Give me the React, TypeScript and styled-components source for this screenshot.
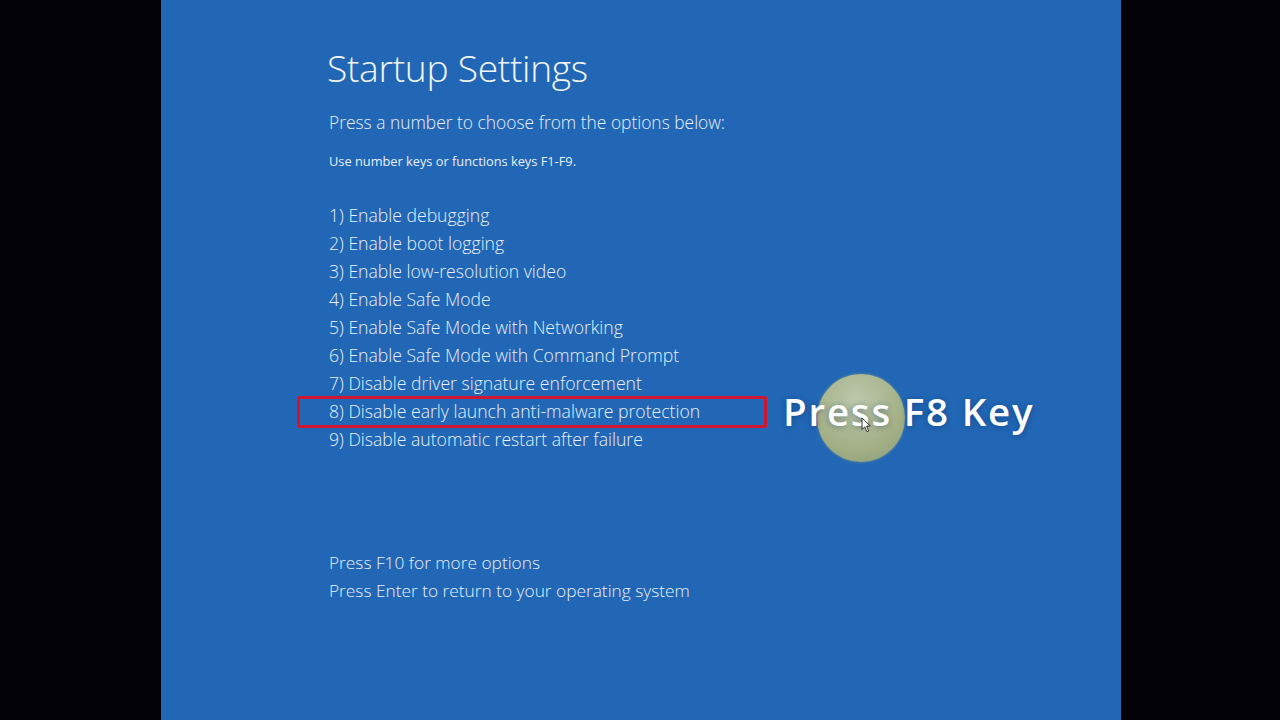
import React from "react";
import styled, { createGlobalStyle } from "styled-components";

const GlobalStyle = createGlobalStyle`
  html, body {
    margin: 0;
    padding: 0;
    background: #000;
  }
  #root {
    width: 1280px;
    height: 720px;
  }
`;

const options = [
  "1) Enable debugging",
  "2) Enable boot logging",
  "3) Enable low-resolution video",
  "4) Enable Safe Mode",
  "5) Enable Safe Mode with Networking",
  "6) Enable Safe Mode with Command Prompt",
  "7) Disable driver signature enforcement",
  "8) Disable early launch anti-malware protection",
  "9) Disable automatic restart after failure",
];

export default function App() {
  return (
    <>
      <GlobalStyle />
      <Frame>
        <SideBar $width={161} />
        <Screen>
          <Content>
            <Title>Startup Settings</Title>
            <Lead>Press a number to choose from the options below:</Lead>
            <Hint>Use number keys or functions keys F1-F9.</Hint>
            <OptionList>
              {options.map((text, i) => (
                <Option key={text} $highlight={i === 7}>
                  {text}
                </Option>
              ))}
            </OptionList>
            <Footer>
              <Line>Press F10 for more options</Line>
              <Line>Press Enter to return to your operating system</Line>
            </Footer>
          </Content>

          <Callout>
            <ClickSpot />
            <CalloutText>Press F8 Key</CalloutText>
            <Cursor viewBox="0 0 12 18" aria-hidden>
              <path
                d="M1 1 L1 14 L4 11 L6.5 16.5 L8.5 15.6 L6 10.2 L10.2 10.2 Z"
                fill="#fff"
                stroke="#222"
                strokeWidth="1"
                strokeLinejoin="round"
              />
            </Cursor>
          </Callout>
        </Screen>
        <SideBar />
      </Frame>
    </>
  );
}

const Frame = styled.div`
  display: flex;
  width: 1280px;
  height: 720px;
  background: #000;
  overflow: hidden;
`;

const SideBar = styled.div<{ $width?: number }>`
  flex: ${({ $width }) => ($width ? `0 0 ${$width}px` : "1")};
  background: #030208;
`;

const Screen = styled.div`
  position: relative;
  width: 960px;
  flex: none;
  background: #2167b5;
  color: #e8f0fa;
  font-family: "Open Sans", "Liberation Sans", sans-serif;
`;

const Content = styled.div`
  display: flex;
  flex-direction: column;
  padding: 44px 0 0 166px;
`;

const Title = styled.h1`
  margin: 0;
  font-size: 37.2px;
  font-weight: 300;
  line-height: 48px;
  letter-spacing: -0.3px;
  color: #f2f6fb;
`;

const Lead = styled.p`
  margin: 18px 0 0 2px;
  font-size: 17.4px;
  font-weight: 300;
  line-height: 24px;
`;

const Hint = styled.p`
  margin: 18px 0 0 2px;
  font-size: 12.8px;
  font-weight: 400;
  line-height: 18px;
`;

const OptionList = styled.ul`
  list-style: none;
  margin: 31px 0 0 2px;
  padding: 0;
  display: flex;
  flex-direction: column;
`;

const Option = styled.li<{ $highlight?: boolean }>`
  position: relative;
  font-size: 17.6px;
  font-weight: 300;
  line-height: 28px;

  ${({ $highlight }) =>
    $highlight &&
    `
    &::after {
      content: "";
      box-sizing: border-box;
      position: absolute;
      left: -32px;
      top: -1px;
      width: 470px;
      height: 32px;
      border: 3px solid #d01630;
      border-radius: 2px;
    }
  `}
`;

const Footer = styled.div`
  display: flex;
  flex-direction: column;
  margin: 96px 0 0 2px;
`;

const Line = styled.p`
  margin: 0;
  font-size: 17.3px;
  font-weight: 300;
  line-height: 28px;
`;

const Callout = styled.div`
  position: absolute;
  left: 621px;
  top: 374px;
  width: 300px;
  height: 90px;
`;

const ClickSpot = styled.div`
  position: absolute;
  left: 35px;
  top: 0;
  width: 88px;
  height: 88px;
  border-radius: 50%;
  background: radial-gradient(
    circle at 45% 30%,
    rgba(200, 208, 170, 0.92),
    rgba(176, 182, 126, 0.9) 65%,
    rgba(160, 170, 112, 0.75)
  );
  box-shadow: 0 0 3px rgba(170, 176, 120, 0.6);
`;

const CalloutText = styled.span`
  position: absolute;
  left: 1px;
  top: 13px;
  font-family: "Open Sans", "Liberation Sans", sans-serif;
  font-size: 38.5px;
  font-weight: 600;
  line-height: 48px;
  letter-spacing: 1.8px;
  white-space: nowrap;
  color: #fff;
  text-shadow: 0 1px 6px rgba(0, 30, 80, 0.4);
`;

const Cursor = styled.svg`
  position: absolute;
  left: 79px;
  top: 43px;
  width: 11px;
  height: 16px;
`;
